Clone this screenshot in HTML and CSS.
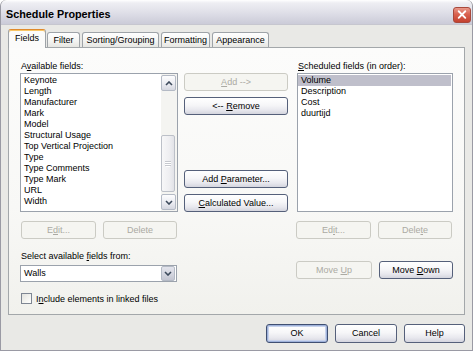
FILE: index.html
```html
<!DOCTYPE html>
<html>
<head>
<meta charset="utf-8">
<link rel="stylesheet" href="styles.css">
</head>
<body>
<div class="window">
  <div class="titlebar">
    <span class="title">Schedule Properties</span>
    <span class="close"><svg width="17" height="16" viewBox="0 0 17 16"><path d="M5 4 L12 11 M12 4 L5 11" stroke="#fff" stroke-width="2" stroke-linecap="round"/></svg></span>
  </div>
  <div class="body">
    <div class="tabs">
      <div class="tab active t-fields">Fields</div>
      <div class="tab t-filter">Filter</div>
      <div class="tab t-sort">Sorting/Grouping</div>
      <div class="tab t-format">Formatting</div>
      <div class="tab t-appear">Appearance</div>
    </div>
    <div class="panel">
      <div class="row-top">
        <div class="col-list">
          <div class="label">A<u>v</u>ailable fields:</div>
          <div class="listbox">
            <ul class="items">
              <li>Keynote</li>
              <li>Length</li>
              <li>Manufacturer</li>
              <li>Mark</li>
              <li>Model</li>
              <li>Structural Usage</li>
              <li>Top Vertical Projection</li>
              <li>Type</li>
              <li>Type Comments</li>
              <li>Type Mark</li>
              <li>URL</li>
              <li>Width</li>
            </ul>
            <div class="scrollbar">
              <div class="sb-btn"><svg width="8" height="5" viewBox="0 0 8 5"><path d="M1 4 L4 1 L7 4" fill="none" stroke="#3d4a5c" stroke-width="1.6"/></svg></div>
              <div class="sb-track">
                <div class="sb-thumb"><span class="grip"></span></div>
              </div>
              <div class="sb-btn"><svg width="8" height="5" viewBox="0 0 8 5"><path d="M1 1 L4 4 L7 1" fill="none" stroke="#3d4a5c" stroke-width="1.6"/></svg></div>
            </div>
          </div>
        </div>
        <div class="col-mid">
          <div class="group">
            <button class="btn" disabled><u>A</u>dd --&gt;</button>
            <button class="btn">&lt;-- <u>R</u>emove</button>
          </div>
          <div class="group">
            <button class="btn">Add <u>P</u>arameter...</button>
            <button class="btn"><u>C</u>alculated Value...</button>
          </div>
        </div>
        <div class="col-list col-right">
          <div class="label"><u>S</u>cheduled fields (in order):</div>
          <div class="listbox">
            <ul class="items">
              <li class="sel">Volume</li>
              <li>Description</li>
              <li>Cost</li>
              <li>duurtijd</li>
            </ul>
          </div>
        </div>
      </div>
      <div class="row-btns">
        <div class="pair">
          <button class="btn small" disabled>E<u>d</u>it...</button>
          <button class="btn small w74" disabled>Delete</button>
        </div>
        <div class="pair right-pair">
          <button class="btn small" disabled>Ed<u>i</u>t...</button>
          <button class="btn small w74" disabled>Dele<u>t</u>e</button>
        </div>
      </div>
      <div class="row-bottom">
        <div class="col-left">
          <div class="label"><span>Select available <u>f</u>ields from:</span></div>
          <div class="combo">
            <span class="combo-text">Walls</span>
            <span class="combo-btn"><svg width="8" height="5" viewBox="0 0 8 5"><path d="M1 1 L4 4 L7 1" fill="none" stroke="#3d4a5c" stroke-width="1.6"/></svg></span>
          </div>
          <label class="check"><span class="box"></span><span>I<u>n</u>clude elements in linked files</span></label>
        </div>
        <div class="pair move-pair">
          <button class="btn small" disabled>Move <u>U</u>p</button>
          <button class="btn small w74">Move <u>D</u>own</button>
        </div>
      </div>
    </div>
    <div class="dialog-btns">
      <button class="btn big default">OK</button>
      <button class="btn big">Cancel</button>
      <button class="btn big w61">Help</button>
    </div>
  </div>
</div>
</body>
</html>
```

FILE: styles.css
```css
* { box-sizing: border-box; }
html, body { margin: 0; padding: 0; background: #ffffff; }
body {
  font-family: "Liberation Sans", Arial, sans-serif;
  font-size: 9px;
  color: #000;
}
.window {
  width: 473px;
  height: 351px;
  background: #e9e9e6;
  border: 1px solid #9a9aa4;
  border-top: none;
  border-radius: 6px 6px 0 0;
  display: flex;
  flex-direction: column;
  overflow: hidden;
}
.titlebar {
  height: 25px;
  display: flex;
  justify-content: space-between;
  align-items: flex-start;
  padding: 0 1px 0 5px;
  background: linear-gradient(to bottom, #ffffff 0, #eeeef3 12%, #dedee7 55%, #cbcbd8 100%);
  border-bottom: 1px solid #c6c6cf;
  border-radius: 6px 6px 0 0;
}
.title {
  font-weight: bold;
  font-size: 10.8px;
  line-height: 13px;
  padding-top: 8px;
  color: #000;
}
.close {
  margin-top: 7px;
  width: 18px;
  height: 16px;
  border-radius: 3px;
  border: 1px solid #a8493c;
  background: linear-gradient(to bottom, #e9998b 0, #d9624f 45%, #c4412f 100%);
  display: flex;
  align-items: center;
  justify-content: center;
}
.close svg { display: block; }
.body {
  flex: 1;
  display: flex;
  flex-direction: column;
  padding: 0 7px 0 7px;
}
.tabs {
  margin-top: 4px;
  height: 18px;
  display: flex;
  align-items: flex-end;
  position: relative;
  z-index: 2;
}
.tab {
  height: 15px;
  line-height: 13px;
  padding-top: 1px;
  text-align: center;
  border: 1px solid #9ea3a8;
  border-bottom: none;
  border-radius: 3px 3px 0 0;
  background: linear-gradient(to bottom, #ffffff 0, #f3f3f1 60%, #e6e6e2 100%);
  margin-left: 2px;
  white-space: nowrap;
}
.tab.active {
  height: 19px;
  margin-bottom: -1px;
  padding-top: 2px;
  background: #fbfbfa;
  border-top: 1px solid #e08a2c;
  box-shadow: inset 0 1px 0 #f8c666;
  margin-left: 0;
}
.t-fields { width: 38px; }
.t-filter { width: 33px; margin-left: 1px; }
.t-sort { width: 77px; }
.t-format { width: 49px; }
.t-appear { width: 57px; }
.panel {
  height: 268px;
  border: 1px solid #a3a7aa;
  background: linear-gradient(to bottom, #fcfcfb 0, #f8f8f6 60%, #f1f1ed 100%);
  padding: 12px 11px 0 11px;
  display: flex;
  flex-direction: column;
}
.row-top {
  display: flex;
  height: 152px;
}
.col-list {
  width: 158px;
  display: flex;
  flex-direction: column;
}
.col-right {
  width: 156px;
  margin-left: 9px;
}
.label {
  height: 12px;
  line-height: 12px;
  margin-bottom: 1px;
  padding-left: 1px;
  white-space: nowrap;
}
.listbox {
  height: 139px;
  border: 1px solid #9ba2ac;
  background: #ffffff;
  display: flex;
}
.items {
  list-style: none;
  margin: 0;
  padding: 1px 1px 0 0;
  flex: 1;
}
.items li {
  height: 11px;
  line-height: 11px;
  padding-left: 3px;
  white-space: nowrap;
}
.items li.sel { background: #bfbfcb; }
.scrollbar {
  width: 16px;
  display: flex;
  flex-direction: column;
  background: #f4f4f1;
}
.sb-btn {
  height: 16px;
  margin: 1px 1px 0 0;
  border: 1px solid #b4bac5;
  border-radius: 2px;
  background: linear-gradient(to bottom, #fdfdfe 0, #e9eaf0 60%, #d5d7e0 100%);
  display: flex;
  align-items: center;
  justify-content: center;
}
.sb-btn:last-child { margin: 0 1px 1px 0; }
.sb-track {
  flex: 1;
  display: flex;
  flex-direction: column;
  justify-content: flex-end;
  padding-bottom: 2px;
}
.sb-thumb {
  height: 57px;
  margin-right: 2px;
  border: 1px solid #bcc0c8;
  border-radius: 2px;
  background: linear-gradient(to right, #f7f7f8 0, #eeeef1 60%, #e2e3e8 100%);
  display: flex;
  align-items: center;
  justify-content: center;
}
.grip {
  width: 6px;
  height: 5px;
  border-top: 1px solid #c6c8ce;
  border-bottom: 1px solid #c6c8ce;
  box-shadow: inset 0 1px 0 #fff, inset 0 -1px 0 #fff, 0 2px 0 -1px #fff;
  background: linear-gradient(to bottom, transparent 1px, #c6c8ce 1px, #c6c8ce 2px, transparent 2px);
}
.col-mid {
  width: 104px;
  margin-left: 6px;
  padding-top: 13px;
  display: flex;
  flex-direction: column;
  justify-content: space-between;
}
.group {
  display: flex;
  flex-direction: column;
  gap: 6px;
}
.btn {
  font-family: "Liberation Sans", Arial, sans-serif;
  font-size: 9px;
  color: #000;
  height: 18px;
  padding: 0;
  border: 1px solid #55607a;
  border-radius: 3px;
  background: linear-gradient(to bottom, #ffffff 0, #f6f6f8 45%, #e8e8ee 75%, #d4d5de 100%);
  text-align: center;
  white-space: nowrap;
  line-height: 16px;
  -webkit-appearance: none;
  appearance: none;
}
.btn:disabled {
  color: #abaaa3;
  border-color: #cbcbc4;
  background: #f5f5f1;
}
.row-btns {
  margin-top: 9px;
  display: flex;
}
.pair {
  display: flex;
  gap: 7px;
  padding-left: 1px;
}
.right-pair { margin-left: 118px; }
.btn.small { width: 75px; }
.btn.small.w74 { width: 74px; }
.row-bottom {
  display: flex;
}
.col-left {
  width: 158px;
  padding-top: 11px;
  display: flex;
  flex-direction: column;
}
.col-left .label { margin-bottom: 3px; }
.combo {
  width: 157px;
  height: 17px;
  border: 1px solid #9ba2ac;
  background: #fff;
  display: flex;
  justify-content: space-between;
  align-items: center;
  padding: 0 1px 0 3px;
}
.combo-text { line-height: 15px; }
.combo-btn {
  width: 14px;
  height: 15px;
  border: 1px solid #b4bac5;
  border-radius: 2px;
  background: linear-gradient(to bottom, #e3e4ec 0, #d2d4de 60%, #c3c5d1 100%);
  display: flex;
  align-items: center;
  justify-content: center;
}
.check {
  margin-top: 10px;
  height: 13px;
  display: flex;
  align-items: center;
  gap: 4px;
  padding-left: 1px;
  white-space: nowrap;
}
.box {
  width: 11px;
  height: 11px;
  border: 1px solid #7e8693;
  background: linear-gradient(135deg, #e2e2de 0, #f4f4f1 60%, #ffffff 100%);
}
.move-pair {
  margin-left: 118px;
  margin-top: 22px;
  padding-left: 0;
}
.move-pair .btn.small { width: 76px; }
.move-pair .btn.small.w74 { width: 74px; }
.dialog-btns {
  margin-top: 9px;
  display: flex;
  justify-content: flex-end;
  gap: 7px;
}
.btn.big {
  width: 62px;
  height: 19px;
  line-height: 17px;
}
.btn.big.w61 { width: 61px; }
.btn.default {
  border-color: #3f4f72;
  box-shadow: inset 0 0 0 1px #9fb2da, inset 0 0 0 2px #c8d3ec;
}
```
